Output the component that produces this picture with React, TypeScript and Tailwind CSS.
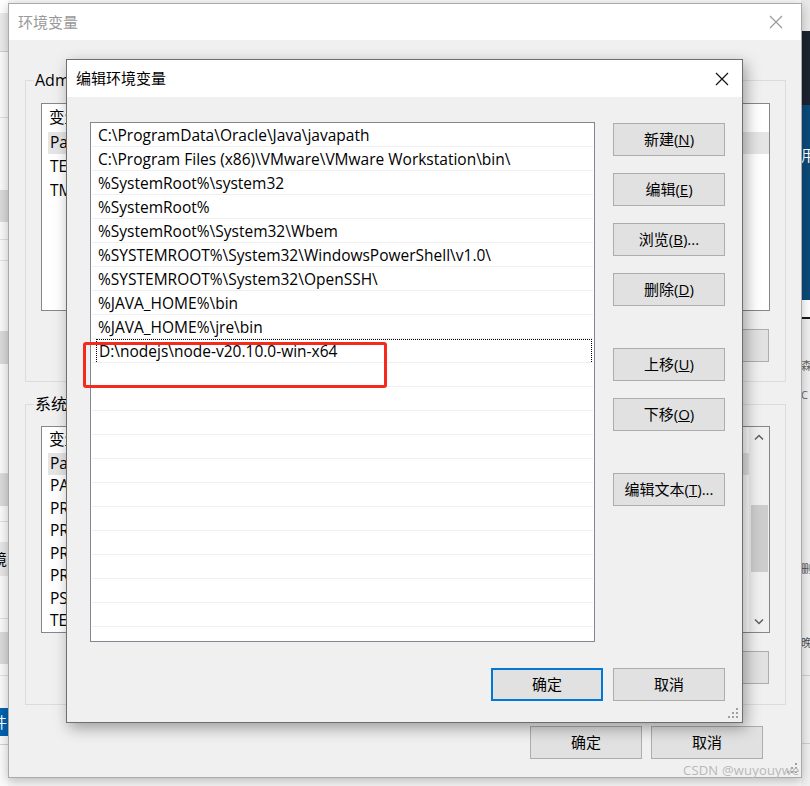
import type { ReactNode } from 'react'

const font = { fontFamily: '"Open Sans", "Noto Sans CJK SC", sans-serif' }

const paths = [
  'C:\\ProgramData\\Oracle\\Java\\javapath',
  'C:\\Program Files (x86)\\VMware\\VMware Workstation\\bin\\',
  '%SystemRoot%\\system32',
  '%SystemRoot%',
  '%SystemRoot%\\System32\\Wbem',
  '%SYSTEMROOT%\\System32\\WindowsPowerShell\\v1.0\\',
  '%SYSTEMROOT%\\System32\\OpenSSH\\',
  '%JAVA_HOME%\\bin',
  '%JAVA_HOME%\\jre\\bin',
]

const userVars = ['Path', 'TEMP', 'TMP']
const sysVars = ['Path', 'PATHEXT', 'PROCESSOR_ARCHITECTURE', 'PROCESSOR_IDENTIFIER', 'PROCESSOR_LEVEL', 'PROCESSOR_REVISION', 'PSModulePath', 'TEMP']

function Btn({ children, primary, className = '' }: { children: ReactNode; primary?: boolean; className?: string }) {
  return (
    <div
      className={`w-[112px] h-[33px] shrink-0 flex items-center justify-center bg-[#e1e1e1] text-[15px] text-black ${
        primary ? 'border-2 border-[#0078d7]' : 'border border-[#adadad]'
      } ${className}`}
    >
      {children}
    </div>
  )
}

function CloseIcon({ color }: { color: string }) {
  return (
    <svg width="14" height="14" viewBox="0 0 14 14">
      <path d="M1 1L13 13M13 1L1 13" stroke={color} strokeWidth="1.2" />
    </svg>
  )
}

function Grip() {
  return (
    <svg width="12" height="12" viewBox="0 0 12 12" fill="#a0a0a0">
      <rect x="8" y="0" width="2" height="2" />
      <rect x="4" y="4" width="2" height="2" />
      <rect x="8" y="4" width="2" height="2" />
      <rect x="0" y="8" width="2" height="2" />
      <rect x="4" y="8" width="2" height="2" />
      <rect x="8" y="8" width="2" height="2" />
    </svg>
  )
}

function VarList({ rows, scroll, height }: { rows: string[]; scroll?: boolean; height: string }) {
  return (
    <div className={`${height} border border-[#828790] bg-white flex overflow-hidden`}>
      <div className="flex-1 flex flex-col pl-[6px] text-[15.5px] text-black">
        <div className="h-[27px] flex items-center pl-[1px]">变量</div>
        {rows.map((r, i) => (
          <div key={r + i} className="h-[24px] flex items-center">
            <div className={`flex-1 h-[22px] flex items-center pl-[2px] ${i === 0 ? 'bg-[#e5e5e5]' : ''}`}>{r}</div>
          </div>
        ))}
      </div>
      {scroll && (
        <div className="w-[20px] bg-[#f0f0f0] flex flex-col items-center py-[7px]">
          <svg width="10" height="6" viewBox="0 0 10 6"><path d="M1 5.5L5 1.5L9 5.5" stroke="#606060" strokeWidth="1.5" fill="none" /></svg>
          <div className="w-[17px] h-[67px] bg-[#cdcdcd] mt-[65px]" />
          <div className="flex-1" />
          <svg width="10" height="6" viewBox="0 0 10 6"><path d="M1 0.5L5 4.5L9 0.5" stroke="#606060" strokeWidth="1.5" fill="none" /></svg>
        </div>
      )}
    </div>
  )
}

function Group({ label, children, className = '' }: { label: string; children: ReactNode; className?: string }) {
  return (
    <div className={`relative border border-[#dcdcdc] px-[15px] ${className}`}>
      <span className="absolute -top-[12px] left-[8px] px-[1px] bg-[#f0f0f0] text-[16px] text-black leading-[22px] whitespace-nowrap">{label}</span>
      {children}
    </div>
  )
}

export default function App() {
  const rows = Array.from({ length: 21 }, (_, i) => i)

  return (
    <div className="relative w-[810px] h-[786px] overflow-hidden bg-[#f7f7f7]" style={font}>
      {/* desktop behind, left edge */}
      <div className="absolute left-0 top-0 w-[8px] h-[786px] bg-[#fafafa] flex flex-col">
        <div className="h-[13px] bg-white" />
        <div className="h-[39px] bg-[#ebebeb] border-b border-[#d0d0d0]" />
        <div className="h-[66px] border-b border-[#e0e0e0]" />
        <div className="h-[72px]" />
        <div className="h-[32px] bg-[#dadada]" />
        <div className="h-[18px] border-b border-[#e0e0e0]" />
        <div className="h-[21px] border-b border-[#e0e0e0]" />
        <div className="h-[70px]" />
        <div className="h-[33px] bg-[#dadada]" />
        <div className="h-[110px] border-b border-[#e0e0e0]" />
        <div className="h-[32px] bg-[#dadada]" />
        <div className="h-[16px] border-b border-[#e0e0e0]" />
        <div className="h-[20px]" />
        <div className="h-[34px] bg-[#e6e6e6] text-[15px] leading-[34px] overflow-hidden">
          <span className="-ml-[8px]">境</span>
        </div>
        <div className="h-[43px] border-b border-[#e0e0e0]" />
        <div className="h-[13px]" />
        <div className="h-[32px] bg-[#dadada]" />
        <div className="h-[12px] border-b border-[#e0e0e0]" />
        <div className="h-[32px]" />
        <div className="h-[28px] bg-[#0063b1] text-white text-[15px] leading-[28px] overflow-hidden">
          <span className="-ml-[8px]">件</span>
        </div>
        <div className="h-[9px] border-b border-[#d0d0d0]" />
      </div>

      {/* desktop behind, right edge */}
      <div className="absolute left-[801px] top-0 w-[9px] h-[786px] bg-[#f0f0f0] flex flex-col">
        <div className="h-[31px] bg-[#e9e9e9]" />
        <div className="h-[74px] bg-[#1c2430]" />
        <div className="h-[195px] bg-[#0b4a7a] pt-[40px] text-white text-[15px] leading-[20px] overflow-hidden">
          <span>用</span>
        </div>
        <div className="h-[17px] bg-white" />
        <div className="h-[2px] bg-[#1a1a1a]" />
        <div className="h-[356px] text-[11px] text-[#666] leading-[14px] pt-[40px] overflow-hidden">
          <div>森</div>
          <div className="mt-[15px]">C</div>
          <div className="mt-[160px] text-[#555]">删</div>
          <div className="mt-[60px] text-[#555]">晚</div>
        </div>
        <div className="h-[1px] bg-[#cfcfcf]" />
        <div className="h-[67px]" />
        <div className="h-[1px] bg-[#cfcfcf]" />
      </div>

      {/* outer dialog: 环境变量 */}
      <div className="absolute left-[8px] top-[3px] w-[794px] h-[775px] border border-[#aaaaaa] bg-[#f0f0f0] shadow-[0_3px_10px_rgba(0,0,0,0.25)] flex flex-col">
        <div className="h-[36px] shrink-0 bg-white flex items-center justify-between pl-[9px] pr-[18px]">
          <span className="text-[15px] text-[#999999]">环境变量</span>
          <CloseIcon color="#9a9a9a" />
        </div>
        <div className="flex-1 flex flex-col pl-[16px] pr-[15px] pt-[40px]">
          <Group label="Administrator 的用户变量(U)" className="h-[302px] pt-[22px]">
            <VarList rows={userVars} height="h-[208px]" />
            <div className="flex justify-end gap-[10px] mt-[18px] mr-[1px]">
              <Btn>新建(N)...</Btn>
              <Btn>编辑(E)...</Btn>
              <Btn>删除(D)</Btn>
            </div>
          </Group>
          <Group label="系统变量(S)" className="h-[301px] pt-[21px] mt-[22px]">
            <VarList rows={sysVars} scroll height="h-[207px]" />
            <div className="flex justify-end gap-[10px] mt-[18px] mr-[1px]">
              <Btn>新建(W)...</Btn>
              <Btn>编辑(I)...</Btn>
              <Btn>删除(L)</Btn>
            </div>
          </Group>
          <div className="flex justify-end gap-[9px] mt-[21px] pr-[23px]">
            <Btn>确定</Btn>
            <Btn>取消</Btn>
          </div>
        </div>
        <div className="absolute right-[2px] bottom-[2px]"><Grip /></div>
      </div>

      {/* inner dialog: 编辑环境变量 */}
      <div className="absolute left-[66px] top-[59px] w-[677px] h-[664px] border border-[#6f6f6f] bg-[#f0f0f0] shadow-[3px_5px_14px_rgba(0,0,0,0.35)] flex flex-col">
        <div className="h-[37px] shrink-0 bg-white flex items-center justify-between pl-[9px] pr-[13px]">
          <span className="text-[15px] text-black">编辑环境变量</span>
          <CloseIcon color="#111111" />
        </div>
        <div className="flex pl-[23px] pt-[25px]">
          <div className="w-[505px] h-[520px] border border-[#828790] bg-white flex flex-col px-[1px] overflow-hidden">
            {rows.map(i => {
              const text = i < paths.length ? paths[i] : i === paths.length ? 'D:\\nodejs\\node-v20.10.0-win-x64' : ''
              const editing = i === paths.length
              return (
                <div key={i} className="h-[24px] shrink-0 border-b border-[#efefef] flex text-[15.5px] text-black">
                  {editing ? (
                    <div className="flex-1 ml-[4px] mr-[1px] border-t border-l border-r border-dotted border-black flex items-center pl-[2px] pt-[2px]">
                      {text}
                    </div>
                  ) : (
                    <div className="flex-1 flex items-center pl-[6px] pt-[2px]">{text}</div>
                  )}
                </div>
              )
            })}
          </div>
          <div className="ml-[18px] pt-[1px] flex flex-col">
            <Btn><span>新建(<u>N</u>)</span></Btn>
            <Btn className="mt-[17px]"><span>编辑(<u>E</u>)</span></Btn>
            <Btn className="mt-[17px]"><span>浏览(<u>B</u>)...</span></Btn>
            <Btn className="mt-[17px]"><span>删除(<u>D</u>)</span></Btn>
            <Btn className="mt-[42px]"><span>上移(<u>U</u>)</span></Btn>
            <Btn className="mt-[17px]"><span>下移(<u>O</u>)</span></Btn>
            <Btn className="mt-[42px]"><span>编辑文本(<u>T</u>)...</span></Btn>
          </div>
        </div>
        <div className="flex justify-end gap-[10px] mt-[26px] pr-[17px]">
          <Btn primary>确定</Btn>
          <Btn>取消</Btn>
        </div>
        <div className="absolute right-[2px] bottom-[2px]"><Grip /></div>
      </div>

      {/* annotation */}
      <div className="absolute left-[83px] top-[342px] w-[304px] h-[46px] border-[3px] border-[#f52a1f] rounded-[3px]" />

      <span className="absolute left-[683px] top-[761px] text-[13px] text-[#b8b8b8] tracking-[0.2px]">CSDN @wuyouywe</span>
    </div>
  )
}
